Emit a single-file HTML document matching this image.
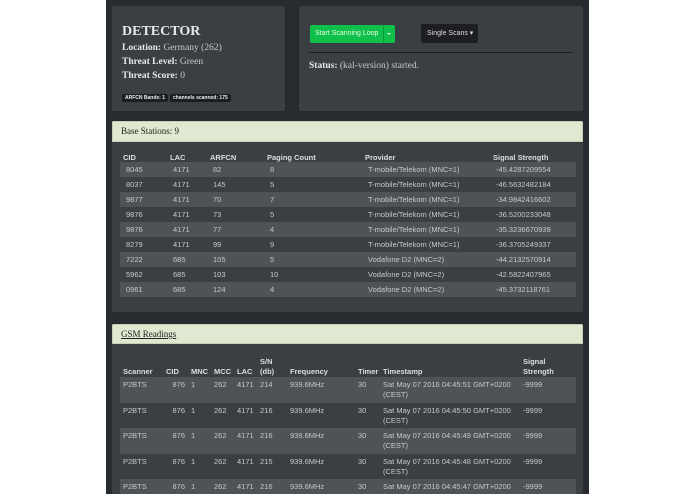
<!DOCTYPE html>
<html style="width:695px;height:494px;overflow:hidden"><head><meta charset="utf-8"><style>
*{margin:0;padding:0;box-sizing:border-box}
body{width:695px;height:494px;background:#fff;overflow:hidden;position:relative;font-family:"Liberation Sans",sans-serif}
#wrap{position:absolute;left:106px;top:0;width:483px;height:494px;background:#272b30}
.panel{position:absolute;background:#3a3f44;border-radius:2px;overflow:hidden}
.serif{font-family:"Liberation Serif",serif;color:#c8c8c8}
.serif b{color:#e8e8e8}
.hdr{position:absolute;left:0;right:0;top:0;background:#dfe8d0;border:1px solid #c4d0b0;font-family:"Liberation Serif",serif;font-size:9px;color:#222;padding-left:8px}
table{border-collapse:collapse;font-size:7.5px;color:#c8c8c8;table-layout:fixed}
th{color:#ddd;font-weight:bold;text-align:left;padding:0 3px;vertical-align:bottom}
td{padding:0 3px;vertical-align:top}
.bs tr.r{height:15px}
.bs td{vertical-align:middle;padding-left:6px}
.odd{background:#4e5358}
.gsm tr.r{height:25.5px}
.gsm td{padding-top:3px;line-height:10px}
.badge{display:inline-block;background:#1c1e22;color:#eee;font-size:5px;font-weight:bold;padding:1px 3px;border-radius:2px;margin-right:2px;font-family:"Liberation Sans",sans-serif}
</style></head><body>
<div id="wrap"></div>
<div class="panel" style="left:112px;top:6px;width:173px;height:105px">
 <div class="serif" style="position:absolute;left:10px;top:18px;font-size:14px;font-weight:bold;color:#e8e8e8">DETECTOR</div>
 <div class="serif" style="position:absolute;left:10px;top:35px;font-size:9.5px;line-height:14px"><b>Location:</b> Germany (262)<br><b>Threat Level:</b> Green<br><b>Threat Score:</b> 0</div>
 <div style="position:absolute;left:10px;top:80px"><span class="badge">ARFCN Bands: 1</span><span class="badge">channels scanned: 175</span></div>
</div>
<div class="panel" style="left:299px;top:6px;width:284px;height:105px">
 <div style="position:absolute;left:11px;top:19px;width:85px;height:18px;background:#0fc04a;border-radius:2px;color:#e8ffe8;font-size:7px;line-height:18px;padding-left:5px">Start Scanning Loop</div>
 <div style="position:absolute;left:84px;top:19px;width:1px;height:18px;background:#0a9a3a"></div>
 <div style="position:absolute;left:88px;top:27px;border-left:2px solid transparent;border-right:2px solid transparent;border-top:2px solid #eee"></div>
 <div style="position:absolute;left:122px;top:18px;width:57px;height:19px;background:#1c1e22;border-radius:2px;color:#ddd;font-size:7px;line-height:19px;padding-left:6px">Single Scans ▾</div>
 <div style="position:absolute;left:10px;top:46px;width:264px;height:1px;background:#1e2125"></div>
 <div class="serif" style="position:absolute;left:10px;top:55px;font-size:9.5px"><b>Status:</b> (kal-version) started.</div>
</div>
<div class="panel" style="left:112px;top:121px;width:471px;height:191px">
 <div class="hdr" style="height:21px;line-height:19px">Base Stations: 9</div>
 <table class="bs" style="position:absolute;left:8px;top:26px;width:456px">
  <colgroup><col style="width:47px"><col style="width:40px"><col style="width:57px"><col style="width:98px"><col style="width:128px"><col style="width:86px"></colgroup>
  <tr style="height:15px"><th>CID</th><th>LAC</th><th>ARFCN</th><th>Paging Count</th><th>Provider</th><th>Signal Strength</th></tr>
  <tr class="r odd"><td>8045</td><td>4171</td><td>82</td><td>8</td><td>T-mobile/Telekom (MNC=1)</td><td>-45.4287209554</td></tr>
  <tr class="r"><td>8037</td><td>4171</td><td>145</td><td>5</td><td>T-mobile/Telekom (MNC=1)</td><td>-46.5632482184</td></tr>
  <tr class="r odd"><td>9877</td><td>4171</td><td>70</td><td>7</td><td>T-mobile/Telekom (MNC=1)</td><td>-34.9842416602</td></tr>
  <tr class="r"><td>9876</td><td>4171</td><td>73</td><td>5</td><td>T-mobile/Telekom (MNC=1)</td><td>-36.5200233048</td></tr>
  <tr class="r odd"><td>9876</td><td>4171</td><td>77</td><td>4</td><td>T-mobile/Telekom (MNC=1)</td><td>-35.3236670939</td></tr>
  <tr class="r"><td>8279</td><td>4171</td><td>99</td><td>9</td><td>T-mobile/Telekom (MNC=1)</td><td>-36.3705249337</td></tr>
  <tr class="r odd"><td>7222</td><td>685</td><td>105</td><td>5</td><td>Vodafone D2 (MNC=2)</td><td>-44.2132570914</td></tr>
  <tr class="r"><td>5962</td><td>685</td><td>103</td><td>10</td><td>Vodafone D2 (MNC=2)</td><td>-42.5822407965</td></tr>
  <tr class="r odd"><td>0961</td><td>685</td><td>124</td><td>4</td><td>Vodafone D2 (MNC=2)</td><td>-45.3732118761</td></tr>
 </table>
</div>
<div class="panel" style="left:112px;top:324px;width:471px;height:170px">
 <div class="hdr" style="height:20px;line-height:19px"><u>GSM Readings</u></div>
 <table class="gsm" style="position:absolute;left:8px;top:29px;width:456px">
  <colgroup><col style="width:43px"><col style="width:25px"><col style="width:23px"><col style="width:23px"><col style="width:23px"><col style="width:30px"><col style="width:68px"><col style="width:25px"><col style="width:140px"><col style="width:56px"></colgroup>
  <tr style="height:24px;line-height:10px"><th>Scanner</th><th>CID</th><th>MNC</th><th>MCC</th><th>LAC</th><th>S/N<br>(db)</th><th>Frequency</th><th>Timer</th><th>Timestamp</th><th>Signal<br>Strength</th></tr>
  <tr class="r odd"><td>P2BTS</td><td style="text-align:right">876</td><td>1</td><td>262</td><td>4171</td><td>214</td><td>939.6MHz</td><td>30</td><td>Sat May 07 2016 04:45:51 GMT+0200 (CEST)</td><td>-9999</td></tr>
  <tr class="r"><td>P2BTS</td><td style="text-align:right">876</td><td>1</td><td>262</td><td>4171</td><td>216</td><td>939.6MHz</td><td>30</td><td>Sat May 07 2016 04:45:50 GMT+0200 (CEST)</td><td>-9999</td></tr>
  <tr class="r odd"><td>P2BTS</td><td style="text-align:right">876</td><td>1</td><td>262</td><td>4171</td><td>216</td><td>939.6MHz</td><td>30</td><td>Sat May 07 2016 04:45:49 GMT+0200 (CEST)</td><td>-9999</td></tr>
  <tr class="r"><td>P2BTS</td><td style="text-align:right">876</td><td>1</td><td>262</td><td>4171</td><td>215</td><td>939.6MHz</td><td>30</td><td>Sat May 07 2016 04:45:48 GMT+0200 (CEST)</td><td>-9999</td></tr>
  <tr class="r odd"><td>P2BTS</td><td style="text-align:right">876</td><td>1</td><td>262</td><td>4171</td><td>216</td><td>939.6MHz</td><td>30</td><td>Sat May 07 2016 04:45:47 GMT+0200 (CEST)</td><td>-9999</td></tr>
 </table>
</div>
</body></html>
